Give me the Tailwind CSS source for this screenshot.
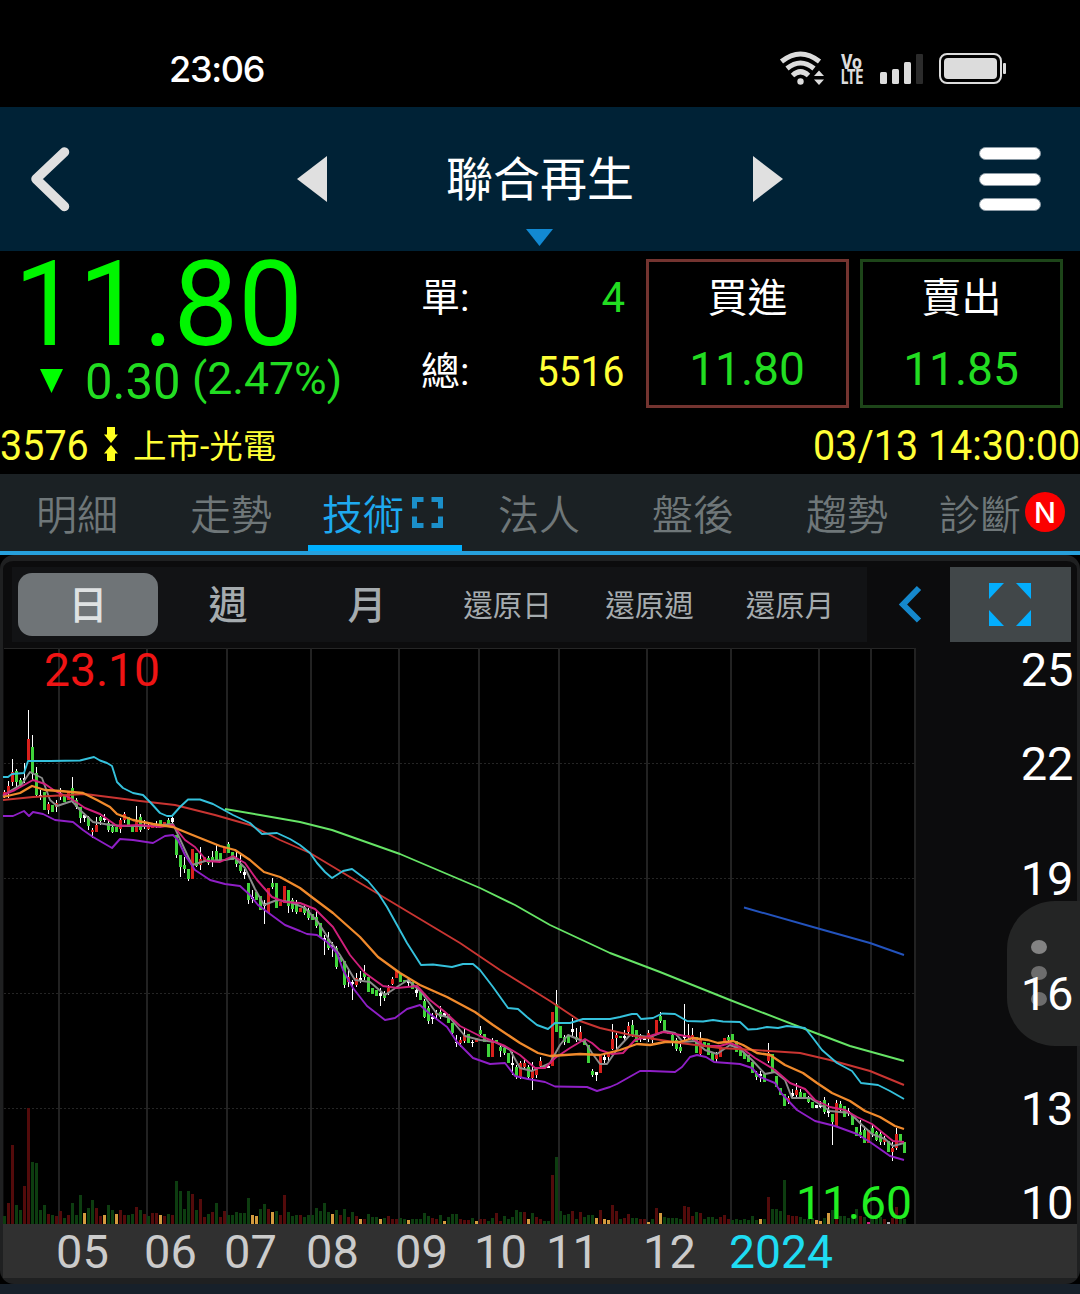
<!DOCTYPE html>
<html lang="zh-Hant">

<head>
    <meta charset="UTF-8">
    <meta name="viewport" content="width=device-width, initial-scale=1.0">
    <script src="https://cdn.jsdelivr.net/npm/@tailwindcss/browser@4"></script>
    <title>聯合再生 3576</title>
</head>

<body class="bg-black w-[1080px] h-[1294px] overflow-hidden font-[Roboto,'Noto_Sans_CJK_TC',sans-serif] text-white">
    <!-- status bar -->
    <div class="h-[107px] pt-[29px] pl-[169px] pr-[73px] flex items-center justify-between">
        <span class="font-[Inter,sans-serif] font-medium text-[36px] leading-none tracking-[-1.3px] pt-px">23:06</span>
        <svg class="w-[228px] h-[40px]" viewBox="779 48 228 40" fill="none">
            <g stroke="#dcdcdc" stroke-width="5">
                <path d="M781.5 61.5Q800.5 46.5 819.500 61.500" />
                <path d="M787 68.500Q800.500 57.500 814 68.500" />
                <path d="M792.500 75.500Q800.500 68 808.500 75.500" />
            </g>
            <circle cx="800.500" cy="81.500" r="3.200" fill="#dcdcdc" />
            <path d="M814 76l5-5.500 5 5.500zM814 79.500h10l-5 5.500z" fill="#dcdcdc" />
            <g fill="#dcdcdc" font-family="Roboto" font-weight="800" font-size="20">
                <text x="841" y="68.500" textLength="21" lengthAdjust="spacingAndGlyphs">Vo</text>
                <text x="841" y="84" textLength="22" lengthAdjust="spacingAndGlyphs">LTE</text>
            </g>
            <rect x="880" y="72" width="7" height="12" rx="1.500" fill="#dcdcdc" />
            <rect x="892" y="69" width="7" height="15" rx="1.500" fill="#dcdcdc" />
            <rect x="904" y="62" width="7" height="22" rx="1.500" fill="#dcdcdc" />
            <rect x="916" y="54" width="7" height="30" rx="1" fill="#2b2b2b" />
            <rect x="940" y="54" width="61" height="29" rx="7" stroke="#dcdcdc" stroke-width="2" />
            <rect x="944" y="58" width="53" height="21" rx="4" fill="#dcdcdc" />
            <rect x="1003" y="63" width="3" height="11" rx="1" fill="#dcdcdc" />
        </svg>
    </div>

    <!-- title bar -->
    <header class="relative h-[144px] bg-[#002236] pl-[29px] pr-[39px] flex items-center justify-between">
        <svg class="w-[42px] h-[68px]" viewBox="0 0 42 68"><path d="M35.500 7L7 34l28.500 27.500" fill="none" stroke="#e0e0e0" stroke-width="9.500" stroke-linecap="round" stroke-linejoin="round" /></svg>
        <div class="absolute left-[297px] w-[486px] h-full flex items-center justify-between">
            <svg class="w-[30px] h-[46px]" viewBox="0 0 30 46"><path d="M0 23L30 0v46z" fill="#e0e0e0" /></svg>
            <h1 class="text-[47px] leading-none pt-px">聯合再生</h1>
            <svg class="w-[30px] h-[46px]" viewBox="0 0 30 46"><path d="M30 23L0 0v46z" fill="#e0e0e0" /></svg>
        </div>
        <svg class="absolute left-[526px] bottom-[5px] w-[27px] h-[17px]" viewBox="0 0 27 17"><path d="M0 0h27L13.500 17z" fill="#1289d2" /></svg>
        <div class="w-[62px] h-[64px] flex flex-col justify-between">
            <span class="h-[13px] rounded-full bg-white border border-[#8b9aa5]"></span>
            <span class="h-[13px] rounded-full bg-white border border-[#8b9aa5]"></span>
            <span class="h-[13px] rounded-full bg-white border border-[#8b9aa5]"></span>
        </div>
    </header>

    <!-- quote -->
    <section class="h-[163px] flex leading-none">
        <div class="w-[422px]">
            <div class="h-[107px] pl-[14px]">
                <div class="text-[119px] leading-[107px] text-[#00f600] origin-left scale-x-[.966]">11.80</div>
            </div>
            <div class="flex text-[#22dd22] pl-[40px] h-[46px]">
                <svg class="w-[23px] h-[24px] mt-[11px]" viewBox="0 0 23 24"><path d="M0 0h23L11.500 24z" fill="#00ff00" /></svg>
                <span class="text-[50px] leading-[46px] w-[100px] ml-[22px] mt-[1px] origin-left scale-x-[.98]">0.30</span>
                <span class="text-[45px] leading-[46px] ml-[7px] mt-[-2px] whitespace-nowrap origin-left scale-x-[.99]">(2.47%)</span>
            </div>
        </div>
        <div class="w-[203px] pt-[23px] text-[42px] flex flex-col gap-[26px]">
            <div class="flex justify-between items-center h-[48px]"><span class="text-[39px] pt-px ml-[-1px]">單:</span><span class="text-[#22dd22]">4</span></div>
            <div class="flex justify-between items-center h-[48px]"><span class="text-[39px] pt-px ml-[-1px]">總:</span><span class="text-[#ffff37] origin-right scale-x-[.93] pr-px">5516</span></div>
        </div>
        <div class="ml-[21px] mt-[8px] w-[203px] h-[149px] border-3 border-[#743430] flex flex-col items-center pt-[17px] gap-[26px]">
            <span class="text-[40px] h-[40px]">買進</span>
            <span class="text-[47px] text-[#22dd22] origin-center scale-x-[.98]">11.80</span>
        </div>
        <div class="ml-[11px] mt-[8px] w-[203px] h-[149px] border-3 border-[#1d4519] flex flex-col items-center pt-[17px] gap-[26px]">
            <span class="text-[40px] h-[40px]">賣出</span>
            <span class="text-[47px] text-[#22dd22] origin-center scale-x-[.98]">11.85</span>
        </div>
    </section>
    <div class="h-[60px] flex items-center text-[#ffff37] leading-none whitespace-nowrap">
        <span class="text-[42px] w-[104px] pt-[3px] origin-left scale-x-[.94]">3576</span>
        <svg class="w-[14px] h-[34px]" viewBox="0 0 14 36" preserveAspectRatio="none" fill="#ffff20"><path d="M3 0h8v8h3L7 17 0 8h3zM3 36h8v-8h3L7 19 0 28h3z" /></svg>
        <span class="text-[33.500px] ml-[15px] pt-[6px]">上市-光電</span>
        <span class="text-[42px] ml-auto pt-[3px] origin-right scale-x-[.94]">03/13 14:30:00</span>
    </div>

    <!-- tabs -->
    <nav class="h-[81px] bg-[#1b2124] border-b-4 border-[#27a0dc] grid grid-cols-[repeat(6,154px)_1fr] text-[41px] leading-none font-[350] text-[#6f7779]">
        <a class="flex items-center justify-center pt-[7px]">明細</a>
        <a class="flex items-center justify-center pt-[7px]">走勢</a>
        <a class="flex items-center justify-center pt-[13px] pr-[5px] gap-[8px] text-[#1eaaf0] border-b-6 border-[#00b0ff]">技術
            <svg class="w-[31px] h-[31px] mb-[8px]" viewBox="0 0 31 31" fill="none" stroke="#1b8fc9" stroke-width="5"><path d="M2.500 11.500v-9h9M19.500 2.500h9v9M28.500 19.500v9h-9M11.500 28.500h-9v-9" /></svg>
        </a>
        <a class="flex items-center justify-center pt-[7px]">法人</a>
        <a class="flex items-center justify-center pt-[7px]">盤後</a>
        <a class="flex items-center justify-center pt-[7px]">趨勢</a>
        <a class="flex items-center justify-center pt-[7px] gap-[4px]">診斷
            <span class="size-[40px] mb-[8px] rounded-full bg-[#fb0000] text-white font-[Inter,sans-serif] font-medium text-[29px] flex items-center justify-center">N</span>
        </a>
    </nav>

    <!-- chart panel -->
    <main class="relative h-[729px] bg-[#0c0c0d] rounded-[14px] border-x-3 border-y-6 border-[#1f2021]">
        <div class="h-[87px] pt-[6px] flex">
            <div class="ml-[9px] w-[855px] h-[75px] bg-[#121315] flex items-center text-[#a5abae] leading-none">
                <span class="ml-[6px] w-[140px] h-[63px] pt-[4px] rounded-[14px] bg-[#6f7477] text-[#dfe2e3] text-[39px] font-medium flex items-center justify-center">日</span>
                <span class="w-[140px] pt-[4px] text-[39px] font-medium text-center">週</span>
                <span class="w-[138px] pt-[4px] text-[39px] font-medium text-center">月</span>
                <span class="w-[143px] pt-[4px] text-[29.500px] text-center">還原日</span>
                <span class="w-[141px] pt-[4px] text-[29.500px] text-center">還原週</span>
                <span class="w-[140px] pt-[4px] text-[29.500px] text-center">還原月</span>
            </div>
            <svg class="ml-[31px] mt-[18px] w-[24px] h-[40px]" viewBox="0 0 24 40"><path d="M21 3L5 19.500l16 16" fill="none" stroke="#1588cc" stroke-width="6" /></svg>
            <div class="ml-[28px] w-[121px] h-[75px] pr-[2px] bg-[#414749] flex items-center justify-center">
                <svg class="w-[42px] h-[43px]" viewBox="0 0 42 43" fill="#04aefd"><path d="M0 0h15L0 16zM42 0v16L27 0zM0 43V27l15 16zM42 43H27l15-16z" /></svg>
            </div>
        </div>
        <svg id="chart" class="block w-[1074px] h-[630px] overflow-visible" viewBox="3 648 1074 630" font-family="Roboto">
            <rect x="4" y="648" width="911" height="576" fill="#000" />
            <g id="grid" shape-rendering="crispEdges"></g>
            <g id="volume"></g>
            <g id="candles"></g>
            <g fill="none" stroke-width="1.900" stroke-linejoin="round">
                <polyline stroke="#8c8c8c" points="3,796 12,790 22,784 30,772 42,778 50,800 57,806 72,801 80,810 93,822 110,825 125,826 150,826 173,824 185,850 192,865 205,861 225,860 235,858 245,868 255,889 264,905 277,900 290,902 305,908 318,922 330,941 340,955 355,980 370,982 385,995 400,985 408,980 422,993 437,1014 450,1018 465,1036 480,1040 495,1042 510,1050 520,1068 532,1071 550,1063 560,1045 568,1035 585,1042 592,1053 600,1064 607,1064 618,1048 630,1035 650,1037 665,1031 675,1033 683,1042 695,1041 705,1050 717,1054 730,1045 740,1049 752,1060 765,1074 775,1072 785,1080 792,1098 810,1098 830,1111 850,1113 862,1125 872,1134 885,1139 893,1146 904,1143" />
                <polyline stroke="#d0207c" points="3,795 15,790 33,780 45,784 55,791 70,798 85,808 100,814 117,826 140,825 160,827 173,825 185,840 195,847 207,861 220,862 233,856 245,863 257,880 272,897 285,902 300,903 315,909 333,927 350,955 365,973 383,986 397,988 417,986 430,1000 445,1012 460,1026 480,1036 505,1046 520,1055 535,1068 545,1068 555,1058 570,1048 585,1039 592,1043 600,1050 612,1054 623,1053 635,1040 650,1036 663,1032 675,1034 690,1037 705,1046 720,1046 730,1043 740,1047 755,1058 775,1070 790,1083 805,1089 815,1100 830,1107 845,1110 857,1117 872,1124 883,1133 893,1141 904,1142" />
                <polyline stroke="#c93532" points="3,800 33,797 85,794 140,801 175,805 215,815 250,825 280,840 310,853 350,877 400,907 430,925 460,943 500,970 550,1001 580,1021 600,1028 635,1036 680,1043 720,1048 755,1050 800,1053 830,1060 870,1071 904,1085" />
                <polyline stroke="#f08a2c" stroke-width="2.300" points="3,797 20,793 32,786 45,790 60,791 83,793 97,800 110,807 117,814 133,820 153,824 173,827 190,834 220,846 235,850 250,860 264,872 280,877 300,888 313,898 333,913 360,937 378,957 400,973 420,985 447,997 475,1012 493,1025 520,1043 538,1053 550,1056 580,1054 600,1055 620,1050 637,1044 650,1045 665,1042 680,1042 693,1038 708,1040 718,1043 733,1041 743,1045 757,1053 770,1055 785,1065 803,1073 817,1083 832,1093 850,1101 865,1111 880,1117 895,1126 904,1129" />
                <polyline stroke="#66e466" points="225,809 260,815 300,822 332,830 400,854 480,888 515,905 550,925 610,953 660,972 730,1000 805,1029 850,1046 904,1061" />
                <polyline stroke="#2353bd" points="744,907.5 820,929 870,943 904,955" />
                <polyline stroke="#35c1dc" points="3,777 8,777 12,774 24,773 28,761 50,761 80,760.5 94,757 100,760.5 107,763 112,766 117,782 123,788 133,793 143,795 150,802 160,813 167,816 172,816 180,807 188,799.5 200,799.5 213,804 233,815 250,823 262,834 277,833 290,839 300,845 310,853 317,863 325,872 332,878 343,871 352,869 360,875 368,881 378,893 387,907 397,925 407,943 421,965 433,964.5 452,967 463,964 473,964 480,970 493,987 508,1008 518,1009 527,1017 537,1025 548,1029 555,1023 570,1023 583,1019 610,1019 620,1017 632,1014 637,1014 641,1019 653,1018 662,1013.5 675,1014 687,1021 703,1021.5 713,1020 723,1021.5 740,1022 748,1029.5 757,1029 767,1027 778,1028 787,1026 805,1028 813,1038 822,1050 837,1063 852,1071 861,1083 878,1085 890,1091 904,1099" />
                <polyline stroke="#8f1fc6" points="3,816 13,816 24,811 29,816 33,812 43,814 55,820 73,822 83,830 93,837 112,848 120,839 133,840 153,843 165,836 173,835 178,840 185,855 195,870 210,880 225,884 240,886 250,895 258,905 270,914 285,925 300,931 307,934 317,935 327,942 337,953 343,970 353,988 367,1006 385,1020 395,1018 407,1009 420,1005 430,1014 447,1027 457,1042 473,1058 490,1064 505,1063 515,1076 528,1079 545,1082 555,1086.5 587,1087 597,1091 610,1087 617,1084 640,1071 650,1071 675,1072 682,1067 690,1057 697,1055 706,1057 714,1062 740,1064 752,1068 760,1077 775,1083 782,1094 797,1110 815,1121 835,1126 857,1134 870,1142 880,1149 890,1156 904,1160" />
            </g>
            <text x="44" y="686" font-size="47" fill="#ee1414" textLength="116" lengthAdjust="spacingAndGlyphs">23.10</text>
            <text x="796" y="1219" font-size="47" fill="#22ee22" textLength="116" lengthAdjust="spacingAndGlyphs">11.60</text>
            <!-- side handle -->
            <path d="M1080 901h-25a48 48 0 0 0-48 48v49a48 48 0 0 0 48 48h25z" fill="#242525" />
            <g fill="#838383"><ellipse cx="1039" cy="947" rx="8" ry="7" /><ellipse cx="1039" cy="973" rx="8" ry="7" fill="#6d6d6d" /><ellipse cx="1039" cy="999" rx="8" ry="7" fill="#6d6d6d" /></g>
            <g font-size="47" fill="#fff" text-anchor="end">
                <text x="1073.500" y="686">25</text>
                <text x="1073.500" y="780">22</text>
                <text x="1073.500" y="895">19</text>
                <text x="1073.500" y="1010">16</text>
                <text x="1073.500" y="1125">13</text>
                <text x="1073.500" y="1219">10</text>
            </g>
            <rect x="3" y="1224" width="1074" height="54" fill="#303030" />
            <g font-size="47" fill="#cbcbcb">
                <text x="56" y="1268">05</text>
                <text x="144" y="1268">06</text>
                <text x="224" y="1268">07</text>
                <text x="306" y="1268">08</text>
                <text x="395" y="1268">09</text>
                <text x="474" y="1268">10</text>
                <text x="546" y="1268">11</text>
                <text x="643" y="1268">12</text>
                <text x="729" y="1268" fill="#1fdcf2" textLength="104" lengthAdjust="spacingAndGlyphs">2024</text>
            </g>
        </svg>
    </main>
    <div class="h-[10px] bg-[#17202a]"></div>
</body>
<script>
    const colors = { r: '#d8201c', g: '#3fd33a', w: '#ffffff' };
    const volumeColors = { r: '#530b0b', g: '#0d3d10', y: '#d39a3e', w: '#b0b0b0', m: '#d0207c' };

    // one bar per trading day: colour, body top, body bottom, wick top, wick bottom
    const candles = `r 792 796 790 798,r 786 793 781 798,r 772 782 759 786,g 771 782 769 787,g 780 786 778 787,w 778 780 763 783,r 739 760 710 762,g 747 774 735 780,g 773 795 767 797,w 795 797 790 800,g 792 810,r 804 810 802 814,g 805 812,r 803 807 800 812,r 793 797 788 800,g 795 802,r 792 800,g 788 802 777 803,g 800 807 798 809,g 807 818 807 823
w 815 818 813 822,g 817 826 816 830,r 830 832 828 838,r 825 832 817 832,g 817 821 816 825,w 818 820 814 822,g 823 830 820 832,g 827 832 825 833,g 827 832,r 820 829 818 833,r 814 820 812 823,g 817 827,g 825 832,r 822 832 806 832,g 817 830 814 832,w 825 827 820 829,r 827 829 823 830,r 823 828,w 824 826 821 828,g 820 825
r 822 825,g 820 825 818 826,w 818 822 817 824,g 835 855 835 858,g 855 867 855 877,g 865 869 857 873,g 869 879 869 881,r 849 879,g 853 866 853 867,r 859 865 847 870,r 857 862,g 858 863 856 865,g 857 862 851 867,g 851 860 845 861,g 853 860,r 847 853,g 844 853 842 853,g 852 860,g 860 864 852 867,g 865 871 855 873
w 872 875 869 879,g 883 900 883 904,w 897 899 890 903,g 892 900,g 896 910,w 903 906 900 924,r 888 913,g 883 887 878 889,g 883 908,r 902 906,r 886 903,g 890 906 890 913,g 900 909 898 912,g 903 912 900 914,r 908 912,g 907 913 904 915,g 910 918 908 920,g 914 920,g 917 926 911 928,g 923 937
w 938 940 935 955,g 939 948 932 950,w 945 947 942 957,g 948 967 946 969,g 957 962,g 961 985 961 988,r 977 982 968 987,w 982 984 980 1000,r 978 985 973 987,w 978 980 971 983,g 973 977 965 980,g 977 992,g 988 994,g 990 996,w 993 996 988 1006,g 993 998 991 1001,r 988 993 985 995,r 979 984 977 985,r 971 978,g 973 982
g 980 982,w 980 983 977 987,g 982 989,w 990 993 988 997,g 992 1000,g 1001 1017 999 1018,g 1008 1021 1006 1024,w 1017 1019 1013 1024,r 1013 1015 1010 1018,g 1012 1017 1006 1019,w 1013 1016,g 1014 1023,g 1023 1033 1023 1036,w 1042 1043 1035 1047,r 1040 1043 1037 1047,r 1035 1041 1028 1043,g 1034 1043,w 1042 1043 1040 1047,r 1038 1042,g 1030 1034 1026 1035
g 1034 1042,g 1044 1057,r 1042 1057 1038 1057,g 1040 1043,g 1047 1051 1045 1057,g 1048 1053 1046 1055,g 1053 1063,w 1063 1065 1052 1075,g 1067 1077 1065 1079,r 1063 1077 1061 1079,r 1063 1067 1060 1070,g 1067 1077 1065 1079,r 1070 1078 1062 1090,r 1069 1075 1067 1078,r 1061 1066 1057 1068,g 1066 1068,w 1066 1068 1063 1068,r 1012 1066,g 1004 1032 990 1032,g 1026 1038
g 1037 1042 1035 1045,g 1035 1043,w 1029 1032 1018 1037,g 1037 1040 1028 1042,r 1032 1040 1026 1042,g 1039 1045,g 1045 1063,g 1071 1075 1069 1077,w 1072 1075 1072 1081,r 1056 1073,w 1057 1060 1054 1063,r 1053 1057 1052 1062,r 1039 1049 1024 1050,r 1035 1038 1033 1052,g 1036 1038,w 1036 1038 1030 1040,r 1026 1032 1022 1034,g 1025 1035 1020 1037,g 1030 1042,w 1036 1038 1034 1042
w 1038 1040,r 1033 1038 1030 1042,r 1037 1040 1035 1043,r 1020 1033,g 1016 1021 1012 1023,g 1020 1031,g 1032 1034,g 1035 1043 1034 1046,g 1040 1049 1038 1051,g 1047 1051 1044 1053,w 1036 1038 1004 1040,r 1035 1037 1024 1040,r 1035 1037 1028 1040,g 1037 1053,r 1038 1054 1032 1055,g 1042 1047,g 1043 1055,g 1053 1061,r 1055 1059 1052 1062,r 1047 1057
r 1038 1043,g 1037 1040 1035 1043,g 1034 1042,g 1041 1052,g 1050 1056,g 1053 1059,g 1055 1062,g 1062 1073,g 1073 1077 1071 1080,w 1074 1076 1071 1082,g 1074 1082,r 1053 1061 1043 1063,g 1054 1073,g 1076 1087,g 1088 1095,g 1094 1106,r 1098 1102 1096 1104,w 1093 1096 1089 1098,r 1090 1095 1083 1097,g 1092 1097 1089 1098
g 1093 1099,g 1098 1102 1096 1103,g 1102 1108,w 1105 1108,w 1105 1107 1101 1108,g 1100 1112 1097 1114,w 1110 1113 1103 1117,g 1114 1122 1114 1145,r 1103 1126 1100 1127,g 1104 1108 1101 1112,g 1106 1117,w 1111 1113 1108 1116,g 1115 1125,g 1127 1136,g 1132 1135 1120 1138,g 1130 1143 1126 1143,r 1130 1143,g 1128 1133 1125 1137,g 1132 1140 1131 1141,g 1134 1142 1131 1145
r 1138 1142 1136 1145,g 1141 1152,r 1148 1152 1142 1161,r 1134 1148 1128 1150,g 1134 1142,g 1142 1153`.split(/[,\n]/);

    const volume = 'g8 r21 r79 g19 g14 r38 r119 g62 g61 g14 g19 r10 g9 r8 r13 g6 r9 g21 g9 g29 y11 g16 g24 r16 r8 y9 g19 g14 y10 r14 r9 g9 g10 r17 g14 r10 g8 r11 r11 y9 r8 g10 r9 g43 g33 g15 g33 r30 g14 r25 r7 g10 r12 g21 r7 r13 g9 g9 g12 g11 g11 g26 y9 y8 g15 g20 r15 y12 g13 r9 r29 g12 g8 g9 r9 g7 g9 g9 g16 g13 g21 g12 y10 g14 r9 g15 r7 g12 r8 y5 r5 g10 g7 g7 y5 g6 r8 r5 r5 g6 g5 y4 g5 g5 g5 g11 g8 r6 r5 g9 y3 g7 g10 g10 r5 r4 r4 g6 y3 r5 r5 g3 g6 r11 r3 g8 g5 g7 g14 g12 r12 y5 g11 r7 r5 g3 g3 r49 g67 g13 g9 g10 r13 g5 r12 g7 g9 g9 y6 r14 y5 y4 r19 r13 g5 r6 r10 g6 g6 r5 r5 y2 g5 r16 y11 g7 g6 g6 g6 g5 r18 r17 r8 g12 r11 g5 g7 g7 g5 r7 r9 r5 g4 g5 g4 g5 g4 g8 g4 y5 g5 r27 g15 g15 g13 g44 r9 r8 r8 g7 g5 g5 g6 y4 y3 g6 y11 g14 r13 g8 g8 g6 g10 g15 r8 g7 m2 g6 g8 g7 r5 w2 r6 r17 g7 g5'.split(' ');

    let grid = '<path d="M4 648.500H915" stroke="#262626"/>';
    [59, 147, 227, 311, 399, 479, 559, 647, 731, 819, 871, 915].forEach(x => {
        grid += `<rect x="${x - 1}" y="648" width="2" height="576" fill="#222222"/>`;
    });
    [763, 878, 993, 1108].forEach(y => {
        grid += `<path d="M4 ${y + .5}H915" stroke="#252525" stroke-dasharray="2 2"/>`;
    });
    document.getElementById('grid').innerHTML = grid;

    document.getElementById('candles').innerHTML = candles.map((row, i) => {
        const [c, top, bottom, high = top, low = bottom] = row.trim().split(' ');
        const x = 4.5 + i * 4;
        return `<path d="M${x} ${high}V${low}" stroke="#fff" stroke-width="1"/><rect x="${x - 1.5}" y="${top}" width="3" height="${bottom - top}" fill="${colors[c]}"/>`;
    }).join('');

    document.getElementById('volume').innerHTML = volume.map((v, i) => {
        const h = Number(v.slice(1)) - (v === 'r119' ? 3 : 0);
        return `<rect x="${3 + i * 4}" y="${1224 - h}" width="3" height="${h}" fill="${volumeColors[v[0]]}"/>`;
    }).join('');
</script>

</html>
